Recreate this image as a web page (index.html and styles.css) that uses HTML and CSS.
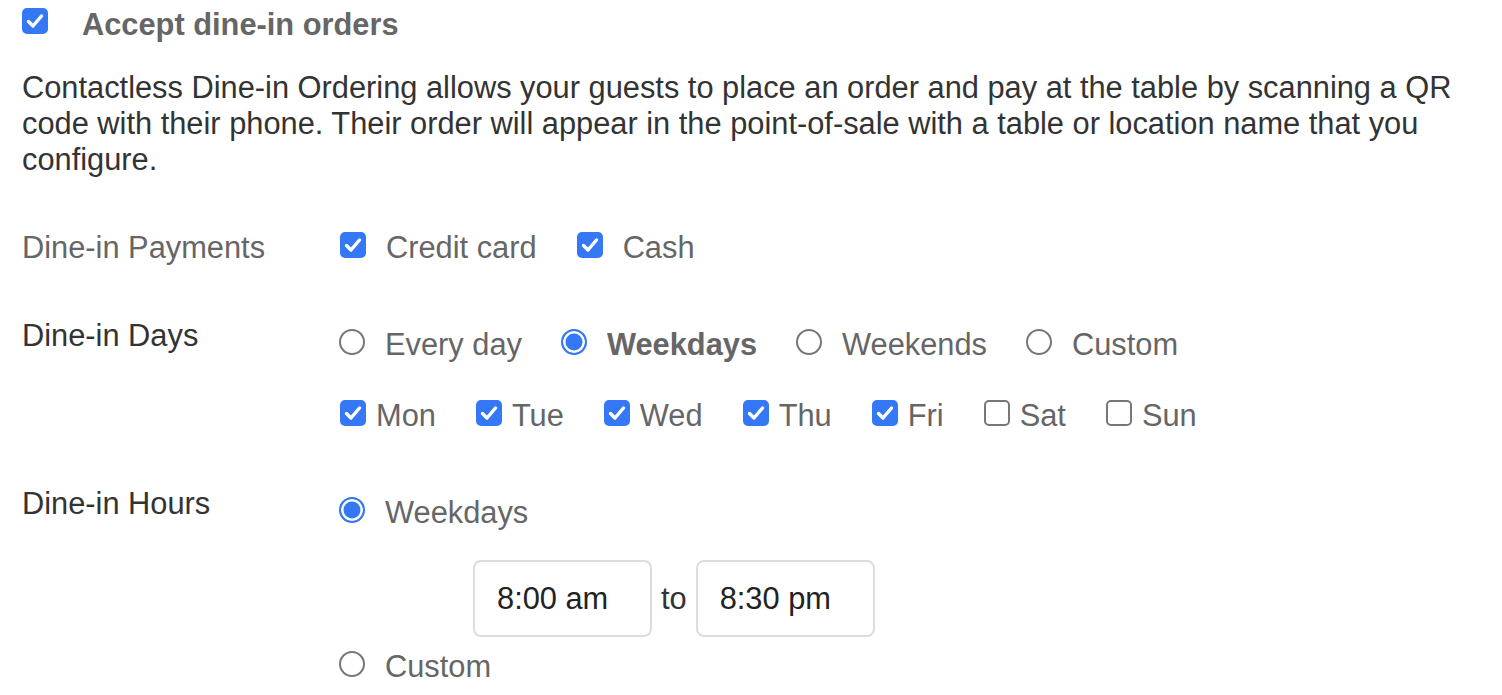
FILE: index.html
```html
<!DOCTYPE html>
<html lang="en">
<head>
  <meta charset="UTF-8">
  <meta name="viewport" content="width=device-width, initial-scale=1.0">
  <title>Dine-in Settings</title>
  <link rel="stylesheet" href="styles.css">
</head>
<body>
  <main class="settings">
    <header class="toggle">
      <span class="box checked"><svg viewBox="0 0 26 26"><path d="M6.5 13.5 L11 18 L19.5 8"/></svg></span>
      <h2>Accept dine-in orders</h2>
    </header>

    <p class="intro">
      Contactless Dine-in Ordering allows your guests to place an order and pay at the table by scanning a QR
      code with their phone. Their order will appear in the point-of-sale with a table or location name that you
      configure.
    </p>

    <section class="field">
      <div class="field-label muted">Dine-in Payments</div>
      <div class="field-body">
        <div class="choices wide">
          <label class="choice"><span class="box checked"><svg viewBox="0 0 26 26"><path d="M6.5 13.5 L11 18 L19.5 8"/></svg></span>Credit card</label>
          <label class="choice"><span class="box checked"><svg viewBox="0 0 26 26"><path d="M6.5 13.5 L11 18 L19.5 8"/></svg></span>Cash</label>
        </div>
      </div>
    </section>

    <section class="field">
      <div class="field-label">Dine-in Days</div>
      <div class="field-body offset">
        <div class="choices wide">
          <label class="choice"><span class="dot"></span>Every day</label>
          <label class="choice active"><span class="dot on"></span>Weekdays</label>
          <label class="choice"><span class="dot"></span>Weekends</label>
          <label class="choice"><span class="dot"></span>Custom</label>
        </div>
        <div class="choices days">
          <label class="choice"><span class="box checked"><svg viewBox="0 0 26 26"><path d="M6.5 13.5 L11 18 L19.5 8"/></svg></span>Mon</label>
          <label class="choice"><span class="box checked"><svg viewBox="0 0 26 26"><path d="M6.5 13.5 L11 18 L19.5 8"/></svg></span>Tue</label>
          <label class="choice"><span class="box checked"><svg viewBox="0 0 26 26"><path d="M6.5 13.5 L11 18 L19.5 8"/></svg></span>Wed</label>
          <label class="choice"><span class="box checked"><svg viewBox="0 0 26 26"><path d="M6.5 13.5 L11 18 L19.5 8"/></svg></span>Thu</label>
          <label class="choice"><span class="box checked"><svg viewBox="0 0 26 26"><path d="M6.5 13.5 L11 18 L19.5 8"/></svg></span>Fri</label>
          <label class="choice"><span class="box"></span>Sat</label>
          <label class="choice"><span class="box"></span>Sun</label>
        </div>
      </div>
    </section>

    <section class="field">
      <div class="field-label">Dine-in Hours</div>
      <div class="field-body offset">
        <label class="choice"><span class="dot on"></span>Weekdays</label>
        <div class="hours">
          <div class="time">8:00 am</div>
          <span>to</span>
          <div class="time">8:30 pm</div>
        </div>
        <label class="choice"><span class="dot"></span>Custom</label>
      </div>
    </section>
  </main>
</body>
</html>
```

FILE: styles.css
```css
body {
  margin: 0;
  font-family: 'Liberation Sans', Arial, sans-serif;
  font-size: 30.8px;
  line-height: 36px;
  color: #333;
  background: #fff;
}

.settings {
  padding: 7px 22px 0;
}

.toggle {
  display: flex;
  align-items: flex-start;
}

.toggle .box {
  margin-top: 1px;
  margin-right: 34px;
}

h2 {
  margin: 0;
  font-size: 30.8px;
  line-height: 36px;
  color: #666;
}

.intro {
  margin: 27px 0 0;
  width: 1460px;
}

.field {
  display: grid;
  grid-template-columns: 318px 1fr;
  margin-top: 52px;
}

.field-label {
  color: #333;
}

.muted {
  color: #666;
}

.field-body {
  color: #666;
}

.offset {
  padding-top: 9px;
}

.choices {
  display: flex;
  align-items: center;
  gap: 40px;
}

.days {
  margin-top: 35px;
  gap: 40px;
}

.choice {
  display: flex;
  align-items: center;
  gap: 10px;
}

.wide .choice {
  gap: 20px;
}

.field-body > .choice {
  gap: 20px;
}

.active {
  font-weight: bold;
}

.box {
  box-sizing: border-box;
  width: 26px;
  height: 26px;
  border: 2px solid #777;
  border-radius: 5px;
  flex: none;
  margin-top: -6px;
  background: #fff;
}

.box.checked {
  border-color: #3478f6;
  background: #3478f6;
}

.box svg {
  display: block;
  width: 26px;
  height: 26px;
  margin: -2px;
}

.box path {
  fill: none;
  stroke: #fff;
  stroke-width: 3.4;
  stroke-linecap: round;
  stroke-linejoin: round;
}

.dot {
  box-sizing: border-box;
  width: 26px;
  height: 26px;
  border: 2px solid #777;
  border-radius: 50%;
  flex: none;
  margin-top: -6px;
  margin-left: -1px;
}

.dot.on {
  border: 2.5px solid #3478f6;
  background: #3478f6;
  box-shadow: inset 0 0 0 2.5px #fff;
}

.hours {
  display: flex;
  align-items: center;
  gap: 9px;
  margin: 29px 0 12px 133px;
  color: #333;
}

.time {
  box-sizing: border-box;
  width: 179px;
  height: 77px;
  padding: 0 22px;
  border: 2px solid #ddd;
  border-radius: 8px;
  display: flex;
  align-items: center;
  color: #222;
}
```
